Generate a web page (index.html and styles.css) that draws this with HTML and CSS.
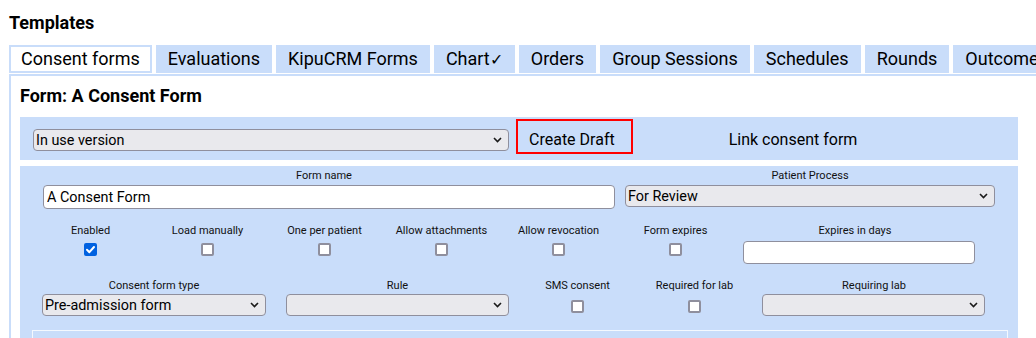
FILE: index.html
```html
<!DOCTYPE html>
<html lang="en">
<head>
<meta charset="utf-8">
<title>Templates</title>
<link rel="stylesheet" href="styles.css">
</head>
<body>
<div class="page">
  <h1 class="title">Templates</h1>
  <div class="tabs">
    <div class="tab active">Consent forms</div>
    <div class="tab">Evaluations</div>
    <div class="tab">KipuCRM Forms</div>
    <div class="tab">Chart<span class="tick">✓</span></div>
    <div class="tab">Orders</div>
    <div class="tab">Group Sessions</div>
    <div class="tab">Schedules</div>
    <div class="tab">Rounds</div>
    <div class="tab">Outcomes</div>
  </div>
  <div class="panel">
    <h2 class="form-title">Form: A Consent Form</h2>
    <div class="version-bar">
      <div class="sel sel-version">
        <select class="select"><option>In use version</option></select>
        <svg class="chev" width="9" height="6" viewBox="0 0 9 6"><polyline points="1,1 4.5,4.5 8,1" fill="none" stroke="#1a1a1a" stroke-width="1.6"/></svg>
      </div>
      <button class="draft">Create Draft</button>
      <div class="link">Link consent form</div>
    </div>
    <div class="fields">
      <div class="row row1">
        <div class="cell c-name">
          <label class="lbl">Form name</label>
          <input class="text in-name" type="text" value="A Consent Form">
        </div>
        <div class="cell c-process">
          <label class="lbl">Patient Process</label>
          <div class="sel sel-process">
            <select class="select"><option>For Review</option></select>
            <svg class="chev" width="9" height="6" viewBox="0 0 9 6"><polyline points="1,1 4.5,4.5 8,1" fill="none" stroke="#1a1a1a" stroke-width="1.6"/></svg>
          </div>
        </div>
      </div>
      <div class="row row2">
        <div class="cell c-check">
          <label class="lbl">Enabled</label>
          <span class="box checked"><svg width="13" height="13" viewBox="0 0 13 13"><polyline points="3,6.8 5.4,9.2 10,4" fill="none" stroke="#fff" stroke-width="2" stroke-linecap="round" stroke-linejoin="round"/></svg></span>
        </div>
        <div class="cell c-check">
          <label class="lbl">Load manually</label>
          <span class="box"></span>
        </div>
        <div class="cell c-check">
          <label class="lbl">One per patient</label>
          <span class="box"></span>
        </div>
        <div class="cell c-check">
          <label class="lbl">Allow attachments</label>
          <span class="box"></span>
        </div>
        <div class="cell c-check">
          <label class="lbl">Allow revocation</label>
          <span class="box"></span>
        </div>
        <div class="cell c-check">
          <label class="lbl">Form expires</label>
          <span class="box"></span>
        </div>
        <div class="cell c-expires">
          <label class="lbl">Expires in days</label>
          <input class="text in-days" type="text" value="">
        </div>
      </div>
      <div class="row row3">
        <div class="cell c-type">
          <label class="lbl">Consent form type</label>
          <div class="sel sel-type">
            <select class="select"><option>Pre-admission form</option></select>
            <svg class="chev" width="9" height="6" viewBox="0 0 9 6"><polyline points="1,1 4.5,4.5 8,1" fill="none" stroke="#1a1a1a" stroke-width="1.6"/></svg>
          </div>
        </div>
        <div class="cell c-rule">
          <label class="lbl">Rule</label>
          <div class="sel sel-rule">
            <select class="select"><option></option></select>
            <svg class="chev" width="9" height="6" viewBox="0 0 9 6"><polyline points="1,1 4.5,4.5 8,1" fill="none" stroke="#1a1a1a" stroke-width="1.6"/></svg>
          </div>
        </div>
        <div class="cell c-check c-check3">
          <label class="lbl">SMS consent</label>
          <span class="box"></span>
        </div>
        <div class="cell c-check c-check3">
          <label class="lbl">Required for lab</label>
          <span class="box"></span>
        </div>
        <div class="cell c-lab">
          <label class="lbl">Requiring lab</label>
          <div class="sel sel-lab">
            <select class="select"><option></option></select>
            <svg class="chev" width="9" height="6" viewBox="0 0 9 6"><polyline points="1,1 4.5,4.5 8,1" fill="none" stroke="#1a1a1a" stroke-width="1.6"/></svg>
          </div>
        </div>
      </div>
      <div class="inner-box"></div>
    </div>
  </div>
</div>
</body>
</html>
```

FILE: styles.css
```css
html, body {
  margin: 0;
  padding: 0;
  overflow: hidden;
  background: #fff;
}

body {
  font-family: Roboto, "Liberation Sans", Arial, sans-serif;
  color: #000;
  width: 1036px;
  height: 338px;
}

.page {
  padding-left: 9px;
}

.title {
  margin: 12px 0 11px 0;
  font-size: 18px;
  line-height: 22px;
  font-weight: 700;
}

.tabs {
  display: flex;
  flex-wrap: nowrap;
  gap: 4px;
  margin-bottom: 1px;
  width: 1200px;
}

.tab {
  flex: none;
  box-sizing: border-box;
  height: 28px;
  padding: 0 10px;
  border: 2px solid #c9ddfa;
  background: #c9ddfa;
  font-size: 18px;
  line-height: 24px;
  white-space: nowrap;
  color: #000;
}

.tab .tick {
  font-size: 16px;
}

.tab.active {
  background: #fff;
}

.panel {
  border-top: 2px solid #c9ddfa;
  border-left: 2px solid #c9ddfa;
  padding: 9px 0 0 9px;
  width: 1200px;
}

.form-title {
  margin: 0 0 10px 0;
  font-size: 18px;
  line-height: 22px;
  font-weight: 700;
}

.version-bar {
  display: flex;
  align-items: flex-start;
  box-sizing: border-box;
  width: 998px;
  height: 43px;
  padding-left: 13px;
  background: #c9ddfa;
}

.sel {
  position: relative;
  display: block;
}

.select {
  -webkit-appearance: none;
  appearance: none;
  display: block;
  box-sizing: border-box;
  width: 100%;
  height: 22px;
  margin: 0;
  padding: 2px 20px 0 2px;
  border: 1px solid #8f8f9d;
  border-radius: 4px;
  background: #e9e9ed;
  font-family: Roboto, "Liberation Sans", Arial, sans-serif;
  font-size: 14.4px;
  line-height: 18px;
  color: #000;
}

.chev {
  position: absolute;
  right: 7px;
  top: 8px;
  pointer-events: none;
}

.sel-version {
  width: 476px;
  margin-top: 12px;
}

.draft {
  box-sizing: border-box;
  width: 117px;
  height: 35px;
  margin: 2px 0 0 7px;
  padding: 6px 0 0 11px;
  border: 2px solid #ff0000;
  background: transparent;
  font-family: Roboto, "Liberation Sans", Arial, sans-serif;
  font-size: 16px;
  line-height: 21px;
  text-align: left;
  color: #000;
  align-self: flex-start;
}

.link {
  width: 320px;
  margin-top: 12px;
  font-size: 16px;
  line-height: 21px;
  text-align: center;
}

.fields {
  box-sizing: border-box;
  width: 998px;
  height: 200px;
  margin-top: 6px;
  padding: 3px 0 0 12px;
  background: #c9ddfa;
}

.row {
  display: flex;
  align-items: flex-start;
}

.row2,
.row3 {
  margin-top: 15px;
}

.cell {
  display: flex;
  flex-direction: column;
  align-items: center;
  flex: none;
}

.lbl {
  display: block;
  font-size: 11px;
  line-height: 13px;
  color: #111;
  white-space: nowrap;
}

.text {
  display: block;
  box-sizing: border-box;
  margin: 0;
  padding: 0 3px;
  border: 1px solid #8f8f9d;
  border-radius: 4px;
  background: #fff;
  font-family: Roboto, "Liberation Sans", Arial, sans-serif;
  font-size: 14.4px;
  color: #000;
  outline: none;
}

.row1 {
  margin-left: 1px;
}

.c-name {
  width: 582px;
}

.in-name {
  align-self: flex-start;
  width: 572px;
  height: 24px;
  margin: 3px 0 0 10px;
}

.c-process {
  width: 390px;
}

.sel-process {
  align-self: flex-start;
  width: 370px;
  margin: 3px 0 0 10px;
}

.c-check {
  width: 117px;
}

.box {
  display: block;
  box-sizing: border-box;
  width: 13px;
  height: 13px;
  margin-top: 6px;
  border: 2px solid #8f8f9d;
  border-radius: 2px;
  background: #fff;
  position: relative;
}

.box.checked {
  border-color: #0061e0;
  background: #0061e0;
}

.box.checked svg {
  position: absolute;
  left: -2px;
  top: -2px;
}

.c-check3 .box {
  margin-top: 8px;
}

.c-expires {
  width: 242px;
}

.in-days {
  align-self: flex-start;
  width: 232px;
  height: 23px;
  margin: 4px 0 0 9px;
}

.c-type {
  width: 244px;
}

.sel-type {
  align-self: flex-start;
  width: 224px;
  margin: 2px 0 0 10px;
}

.c-rule {
  width: 243px;
}

.sel-rule {
  align-self: flex-start;
  width: 223px;
  margin: 2px 0 0 10px;
}

.c-lab {
  width: 242px;
}

.sel-lab {
  align-self: flex-start;
  width: 223px;
  margin: 2px 0 0 9px;
}

.inner-box {
  box-sizing: border-box;
  width: 976px;
  height: 60px;
  margin-top: 14px;
  border: 1px solid #f4f8fe;
}
```
